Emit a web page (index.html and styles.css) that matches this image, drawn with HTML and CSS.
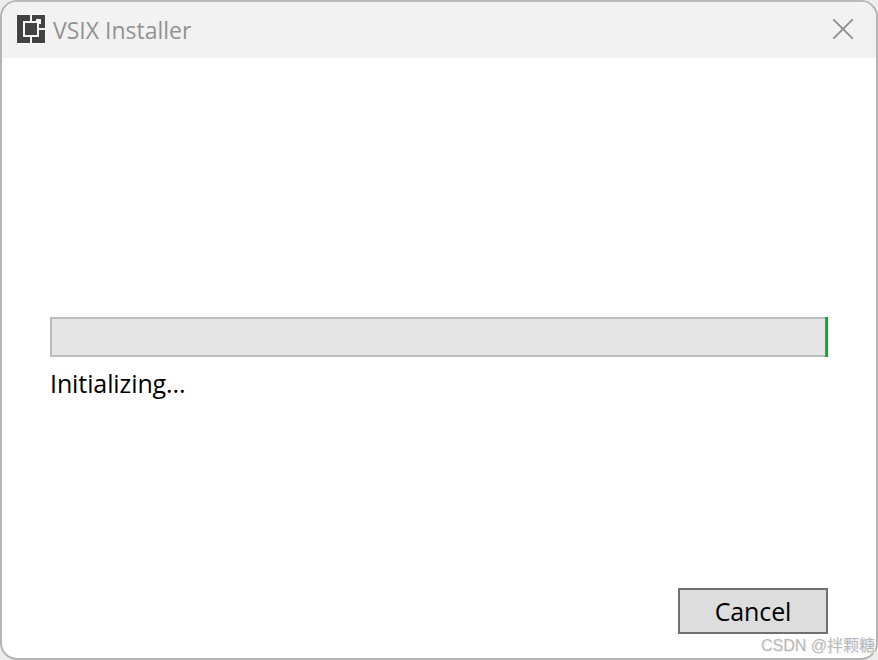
FILE: index.html
```html
<!DOCTYPE html>
<html lang="en">
<head>
<meta charset="utf-8">
<title>VSIX Installer</title>
<link rel="stylesheet" href="styles.css">
</head>
<body>
<div class="window">
  <header class="titlebar">
    <svg class="app-icon" width="30" height="30" viewBox="0 0 30 30" shape-rendering="crispEdges">
      <path fill="#f9f9f9" d="M0 0h30v30H0z"/>
      <path fill="#424242" d="M1 1h28v28H1z"/>
      <path fill="#f5f5f5" d="M14 1h2v6h4V5h5v5h-2v4h6v2h-6v7h-7v6h-2v-6H7V7h7z"/>
      <path fill="#424242" d="M9 9h12v12H9z"/>
    </svg>
    <h1 class="title">VSIX Installer</h1>
    <svg class="close" width="22" height="22" viewBox="0 0 22 22"><path d="M1.3 1.3l19.4 19.4M20.7 1.3L1.3 20.7"/></svg>
  </header>
  <main class="content">
    <div class="progress"><div class="progress-chunk"></div></div>
    <p class="status">Initializing...</p>
  </main>
  <footer class="actions">
    <button class="cancel" type="button">Cancel</button>
  </footer>
</div>
<div class="watermark">CSDN @拌颗糖</div>
</body>
</html>
```
FILE: styles.css
```css
* { box-sizing: border-box; }

body {
  margin: 0;
  height: 660px;
  overflow: hidden;
  background: #ededed;
  font-family: "Open Sans", "Noto Sans", sans-serif;
}

svg { display: block; }

.window {
  display: flex;
  flex-direction: column;
  width: 878px;
  height: 660px;
  border: 2px solid #b4b4b4;
  border-top-color: #bbb;
  border-radius: 17px;
  background: #fff;
  overflow: hidden;
}

.titlebar {
  display: flex;
  flex: none;
  height: 56px;
  padding: 12px 22px 0 14px;
  background: #f2f2f2;
}

.title {
  flex: 1;
  margin: 0 0 0 7px;
  font-size: 23px;
  line-height: 32px;
  font-weight: 400;
  color: #929292;
}

.close {
  margin-top: 4px;
  fill: none;
  stroke: #8d8d8d;
  stroke-width: 1.8;
}

.content {
  flex: 1;
  padding: 259px 48px 0;
}

.progress {
  display: flex;
  justify-content: flex-end;
  height: 40px;
  border: 2px solid #bcbcbc;
  border-right: 0;
  background: #e6e6e6;
}

.progress-chunk {
  width: 3px;
  height: 40px;
  margin-top: -2px;
  background: #06b025;
  border-left: 1px solid #36a04b;
}

.status {
  margin: 9px 0 0;
  font-size: 25px;
  line-height: 34px;
  letter-spacing: -0.1px;
}

.actions {
  display: flex;
  justify-content: flex-end;
  padding: 0 48px 24px;
}

.cancel {
  width: 150px;
  height: 46px;
  padding: 0 0 1px;
  border: 2px solid #707070;
  background: #ddd;
  font: 25px/40px "Open Sans", "Noto Sans", sans-serif;
  letter-spacing: -0.1px;
  color: #000;
}

.watermark {
  position: absolute;
  right: 3px;
  bottom: 2px;
  font: 16px/24px "Liberation Sans", "Noto Sans CJK SC", sans-serif;
  white-space: nowrap;
  color: #b9b9b9;
  text-shadow: 1px 1px 0 #eee;
}
```
